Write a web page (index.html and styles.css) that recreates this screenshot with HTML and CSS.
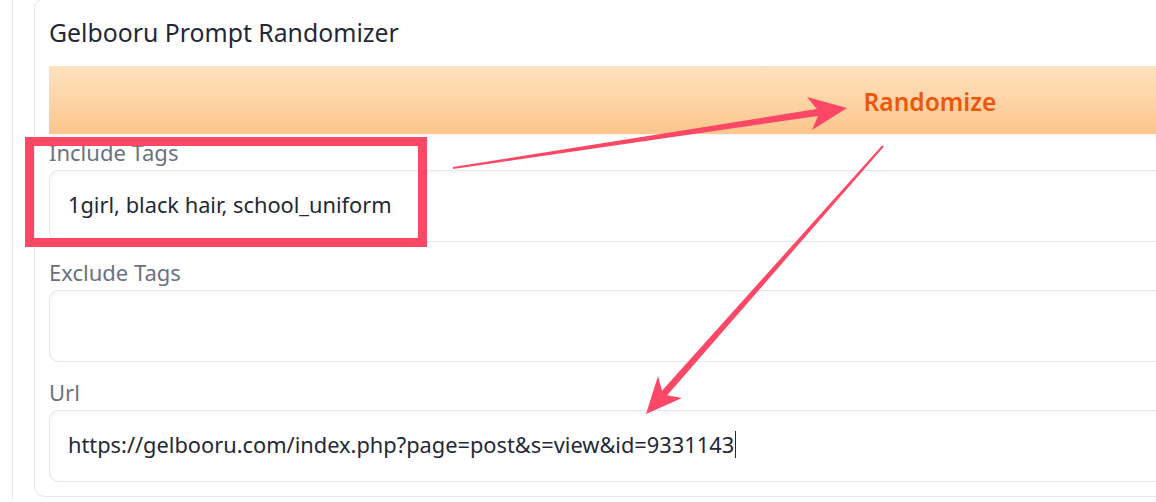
FILE: index.html
```html
<!DOCTYPE html>
<html lang="en">
<head>
<meta charset="utf-8">
<title>Gelbooru Prompt Randomizer</title>
<link rel="stylesheet" href="styles.css">
</head>
<body>
<div class="frame">
  <div class="card">
    <h2 class="title">Gelbooru Prompt Randomizer</h2>
    <button class="randomize" type="button">Randomize</button>
    <div class="field first">
      <label class="label">Include Tags</label>
      <div class="textbox">1girl, black hair, school_uniform</div>
    </div>
    <div class="field">
      <label class="label">Exclude Tags</label>
      <div class="textbox"></div>
    </div>
    <div class="field">
      <label class="label">Url</label>
      <div class="textbox">https://gelbooru.com/index.php?page=post&amp;s=view&amp;id=9331143<span class="caret"></span></div>
    </div>
  </div>
</div>
<svg class="annotations" width="1156" height="502" viewBox="0 0 1156 502" aria-hidden="true">
  <rect x="29.5" y="141.5" width="393" height="101" fill="none" stroke="#fc4866" stroke-width="9"/>
  <path d="M452.85,167.01 L816.81,109.06 L807,97 L847,108 L812,130 L817.87,115.98 L453.15,168.99 Z" fill="#fc4866"/>
  <path d="M882.25,145.34 L661.93,390.71 L658,376 L646,414 L682,398 L667.17,395.35 L883.75,146.66 Z" fill="#fc4866"/>
</svg>
</body>
</html>
```
FILE: styles.css
```css
html, body {
  margin: 0;
  padding: 0;
  background: #ffffff;
}
body {
  width: 1156px;
  height: 502px;
  overflow: hidden;
  position: relative;
  font-family: "Noto Sans", "Open Sans", sans-serif;
}
.frame {
  margin-left: 12px;
  border-left: 1px solid #e7e7eb;
  padding-left: 21px;
  height: 502px;
}
.card {
  width: 1792px;
  margin-top: -2px;
  box-sizing: border-box;
  border: 1px solid #e5e7eb;
  border-radius: 11px;
  padding: 17px 14px 14px 14px;
  background: #ffffff;
}
.title {
  margin: 0 0 18px 0;
  font-size: 24.8px;
  line-height: 32px;
  font-weight: 400;
  color: #1f2937;
}
.randomize {
  display: block;
  width: 100%;
  height: 68px;
  padding: 2px 0 0 0;
  border: none;
  border-radius: 0;
  background: linear-gradient(to bottom, #fee2c0, #fdc68c);
  color: #ea580c;
  font-family: inherit;
  font-size: 24.5px;
  font-weight: 600;
  box-shadow: 0 2px 3px rgba(0,0,0,0.04);
}
.field {
  margin-top: 16px;
}
.field.first {
  margin-top: 4px;
}
.label {
  display: block;
  font-size: 22px;
  line-height: 28px;
  color: #6b7280;
  margin-bottom: 4px;
}
.textbox {
  height: 72px;
  box-sizing: border-box;
  border: 1px solid #e5e7eb;
  border-radius: 9px;
  padding: 0 0 3px 18px;
  display: flex;
  align-items: center;
  font-size: 21.8px;
  color: #1f2937;
  box-shadow: inset 0 2px 5px rgba(0,0,0,0.035);
  white-space: nowrap;
}
.caret {
  display: inline-block;
  width: 0;
  height: 27px;
  border-left: 1px solid #1f2937;
  margin-left: 1px;
}
.annotations {
  position: absolute;
  left: 0;
  top: 0;
  pointer-events: none;
}
```
